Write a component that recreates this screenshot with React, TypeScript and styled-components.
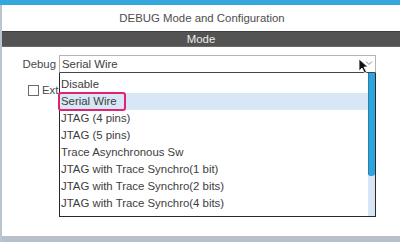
import React from "react";
import styled, { createGlobalStyle } from "styled-components";

const GlobalStyle = createGlobalStyle`
  html, body {
    margin: 0;
    padding: 0;
    background: #fff;
  }
  body {
    font-family: "Liberation Sans", Arial, sans-serif;
  }
`;

const Page = styled.div`
  width: 400px;
  height: 242px;
  display: flex;
  flex-direction: column;
  background: #fff;
  overflow: hidden;
`;

const TopStrip = styled.div`
  height: 5px;
  background: #34a7dc;
`;

const Body = styled.div`
  flex: 1;
  display: flex;
  flex-direction: column;
  border-left: 2px solid #bcc5cd;
  position: relative;
`;

const Title = styled.div`
  height: 26px;
  display: flex;
  align-items: center;
  justify-content: center;
  font-size: 11.4px;
  color: #4d4d4d;
  padding-left: 2px;
`;

const SectionBar = styled.div`
  height: 14px;
  background: #525352;
  border-top: 1px solid #3e3e3e;
  border-bottom: 1px solid #6a6a6a;
  color: #ececec;
  font-size: 11.4px;
  line-height: 14px;
  text-align: center;
`;

const Content = styled.div`
  flex: 1;
  display: flex;
  flex-direction: column;
  padding: 8px 0 0 0;
`;

const FieldRow = styled.div`
  display: flex;
  align-items: center;
  height: 18px;
`;

const Label = styled.div`
  width: 54px;
  text-align: right;
  padding-right: 3px;
  font-size: 11.4px;
  color: #4a4a4a;
`;

const SelectWrap = styled.div`
  position: relative;
  width: 317px;
  height: 18px;
`;

const SelectBox = styled.div`
  box-sizing: border-box;
  height: 18px;
  border: 1px solid #b4b4b4;
  border-bottom-color: #444;
  background: #fff;
  font-size: 11.4px;
  color: #3d3d3d;
  line-height: 16px;
  padding-left: 2px;
`;

const Chevron = styled.svg`
  position: absolute;
  right: 3px;
  top: 5px;
`;

const Cursor = styled.svg`
  position: absolute;
  right: 6px;
  top: 3px;
`;

const DropList = styled.div`
  position: absolute;
  left: 0;
  top: 18px;
  width: 317px;
  height: 144px;
  box-sizing: border-box;
  border: 1px solid #2a2a2a;
  border-top: none;
  background: #fff;
  display: flex;
  z-index: 2;
`;

const Items = styled.div`
  flex: 1;
  display: flex;
  flex-direction: column;
  padding-top: 3px;
`;

const Item = styled.div<{ $selected?: boolean }>`
  height: 17px;
  line-height: 17px;
  font-size: 11.4px;
  color: #3d3d3d;
  padding-left: 1px;
  white-space: nowrap;
  position: relative;
  background: ${(p) => (p.$selected ? "#d8e7f5" : "transparent")};
`;

const Marker = styled.span`
  position: absolute;
  left: -2px;
  top: -1px;
  width: 68px;
  height: 19px;
  box-sizing: border-box;
  border: 2px solid #e3226f;
  border-radius: 3px;
`;

const ScrollTrack = styled.div`
  width: 7px;
  background: #d6e6f5;
  display: flex;
  flex-direction: column;
`;

const ScrollThumb = styled.div`
  height: 103px;
  background: #2fa3dc;
  border-left: 1px solid #2080b8;
  border-radius: 0 0 3px 3px;
  box-sizing: border-box;
`;

const CheckRow = styled.div`
  display: flex;
  align-items: center;
  gap: 3px;
  margin: 10px 0 0 26px;
  height: 14px;
`;

const CheckBox = styled.span`
  flex: none;
  width: 9px;
  height: 9px;
  border: 1px solid #6a6a6a;
  background: #fff;
`;

const CheckLabel = styled.span`
  white-space: nowrap;
  font-size: 11.4px;
  color: #4a4a4a;
`;

const BottomBar = styled.div`
  height: 6px;
  background: #b7c0c8;
`;

const options = [
  "Disable",
  "Serial Wire",
  "JTAG (4 pins)",
  "JTAG (5 pins)",
  "Trace Asynchronous Sw",
  "JTAG with Trace Synchro(1 bit)",
  "JTAG with Trace Synchro(2 bits)",
  "JTAG with Trace Synchro(4 bits)",
];

const App: React.FC = () => {
  return (
    <Page>
      <GlobalStyle />
      <TopStrip />
      <Body>
        <Title>DEBUG Mode and Configuration</Title>
        <SectionBar>Mode</SectionBar>
        <Content>
          <FieldRow>
            <Label>Debug</Label>
            <SelectWrap>
              <SelectBox>Serial Wire</SelectBox>
              <Chevron width="8" height="6" viewBox="0 0 8 6">
                <path d="M1 1.5 L4 4.5 L7 1.5" fill="none" stroke="#888" strokeWidth="1" />
              </Chevron>
              <Cursor width="12" height="16" viewBox="0 0 12 16">
                <path
                  d="M1 1 L1 13 L4 10 L6.5 15 L8.5 14 L6 9 L10 9 Z"
                  fill="#111"
                  stroke="#fff"
                  strokeWidth="0.8"
                />
              </Cursor>
              <DropList>
                <Items>
                  {options.map((o) => (
                    <Item key={o} $selected={o === "Serial Wire"}>
                      {o}
                      {o === "Serial Wire" && <Marker />}
                    </Item>
                  ))}
                </Items>
                <ScrollTrack>
                  <ScrollThumb />
                </ScrollTrack>
              </DropList>
            </SelectWrap>
          </FieldRow>
          <CheckRow>
            <CheckBox />
            <CheckLabel>Ext</CheckLabel>
          </CheckRow>
        </Content>
        <BottomBar />
      </Body>
    </Page>
  );
};

export default App;
